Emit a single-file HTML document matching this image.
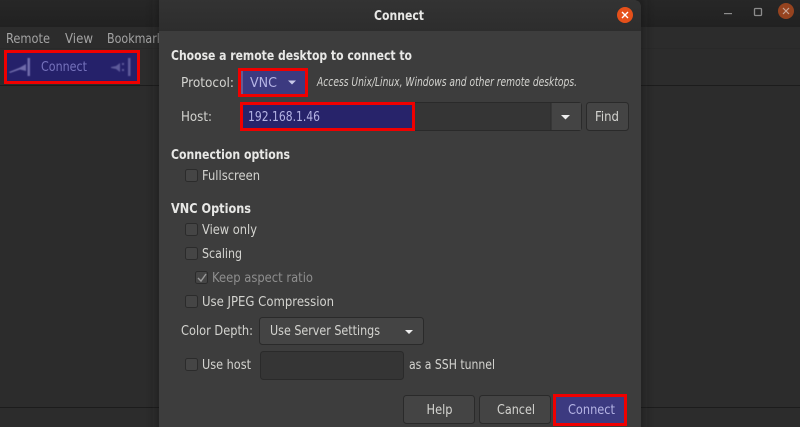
<!DOCTYPE html>
<html>
<head>
<meta charset="utf-8">
<style>
html,body{margin:0;padding:0;background:#2c2c2c;width:800px;height:427px;overflow:hidden}
svg{display:block}
text{font-family:"DejaVu Sans","Liberation Sans",sans-serif;font-size:13px;fill:#d4d4d0}
.b{font-weight:bold;fill:#e8e8e6}
.cb{fill:#454545;stroke:#2b2b2b;stroke-width:1}
.btn{fill:#444444;stroke:#2a2a2a;stroke-width:1}
</style>
</head>
<body>
<svg width="800" height="427" viewBox="0 0 800 427" xmlns="http://www.w3.org/2000/svg">
<defs>
<linearGradient id="tb" x1="0" y1="0" x2="0" y2="1"><stop offset="0" stop-color="#272727"/><stop offset="1" stop-color="#212121"/></linearGradient>
<linearGradient id="hd" x1="0" y1="0" x2="0" y2="1"><stop offset="0" stop-color="#333333"/><stop offset="1" stop-color="#2d2d2d"/></linearGradient>
<filter id="sh" x="-10%" y="-10%" width="120%" height="120%"><feGaussianBlur stdDeviation="5"/></filter>
<filter id="bl" x="-10%" y="-10%" width="120%" height="120%"><feGaussianBlur stdDeviation="0.5"/></filter>
</defs>

<!-- main window -->
<rect x="0" y="0" width="800" height="27" fill="url(#tb)"/>
<rect x="0" y="27" width="800" height="400" fill="#2c2c2c"/>
<rect x="0" y="48" width="800" height="1" fill="#292929"/>
<rect x="0" y="85" width="800" height="1" fill="#1c1c1c"/>
<rect x="0" y="407" width="800" height="1" fill="#1c1c1c"/>

<text x="6" y="43" textLength="44" lengthAdjust="spacingAndGlyphs" style="fill:#a4a4a4">Remote</text>
<text x="65" y="43" textLength="28" lengthAdjust="spacingAndGlyphs" style="fill:#a4a4a4">View</text>
<text x="107" y="43" textLength="62" lengthAdjust="spacingAndGlyphs" style="fill:#a4a4a4">Bookmarks</text>

<!-- toolbar connect -->
<rect x="5.5" y="51.500" width="133" height="31" fill="#25216a" stroke="#f00000" stroke-width="3"/>
<g filter="url(#bl)">
<path d="M9 72 L20 67.500 L26 64 L26 71 L20 69.500 L10 73 Z" fill="#6f6caa"/>
<rect x="27.500" y="58" width="2.500" height="18" fill="#6f6caa"/>
<path d="M111 67 L116 66 L120 63 L120 72 L116 69 L111 68 Z" fill="#5d5a9a"/>
<rect x="122" y="63" width="2" height="2" fill="#5d5a9a"/>
<rect x="122" y="69" width="2" height="2" fill="#5d5a9a"/>
<rect x="128" y="58" width="2.500" height="18" fill="#5d5a9a"/>
</g>
<text x="41" y="71" textLength="46" lengthAdjust="spacingAndGlyphs" style="fill:#7673bd">Connect</text>

<!-- window controls -->
<rect x="724" y="13" width="8" height="1.200" fill="#8c8c8c"/>
<rect x="754.500" y="8.500" width="7" height="7" rx="1" fill="none" stroke="#8c8c8c" stroke-width="1.300"/>
<circle cx="786" cy="11" r="8" fill="#96431f"/>
<path d="M783 8 L789 14 M789 8 L783 14" stroke="#c8a898" stroke-width="1.200" fill="none"/>

<!-- dialog -->
<rect x="156" y="-8" width="488" height="445" rx="8" fill="#141414" opacity=".45" filter="url(#sh)"/>
<path d="M159 427 L159 0 L633 0 Q641 0 641 8 L641 427 Z" fill="#3d3d3d"/>
<path d="M159 31 L159 0 L633 0 Q641 0 641 8 L641 31 Z" fill="url(#hd)"/>
<text class="b" x="374" y="20" textLength="50" lengthAdjust="spacingAndGlyphs">Connect</text>
<circle cx="625" cy="15" r="8" fill="#e5501a"/>
<path d="M622 12 L628 18 M628 12 L622 18" stroke="#fff" stroke-width="1.400" fill="none"/>

<text class="b" x="171" y="60" textLength="241" lengthAdjust="spacingAndGlyphs">Choose a remote desktop to connect to</text>

<text x="181" y="87" textLength="53" lengthAdjust="spacingAndGlyphs">Protocol:</text>
<rect x="239.500" y="69.500" width="67" height="26" fill="#3c3a80" stroke="#f00000" stroke-width="3"/>
<rect x="241" y="71" width="2" height="23" fill="#6a5a90"/>
<text x="250" y="87" textLength="27" lengthAdjust="spacingAndGlyphs" style="fill:#b5b4e4">VNC</text>
<path d="M288 80.500 H296 L292 84.500 Z" fill="#c8c8e8"/>
<text x="317" y="86" textLength="260" lengthAdjust="spacingAndGlyphs" font-style="italic" style="font-size:12px;fill:#d4d4d0">Access Unix/Linux, Windows and other remote desktops.</text>

<text x="181" y="121" textLength="31" lengthAdjust="spacingAndGlyphs">Host:</text>
<rect x="240.500" y="102.500" width="341" height="28" rx="3" fill="#353535" stroke="#2a2a2a"/>
<rect x="551" y="103" width="30" height="27" fill="#444444"/>
<rect x="550.500" y="103" width="1" height="27" fill="#2a2a2a"/>
<path d="M561 115 H570 L565.500 119.500 Z" fill="#eeeeee"/>
<rect x="241.500" y="103.500" width="172" height="26" fill="#27236a" stroke="#f00000" stroke-width="3"/>
<text x="248" y="121" textLength="72" lengthAdjust="spacingAndGlyphs" style="fill:#b5b4e4">192.168.1.46</text>
<rect class="btn" x="586.500" y="102.500" width="42" height="28" rx="3"/>
<text x="595" y="121" textLength="24" lengthAdjust="spacingAndGlyphs">Find</text>

<text class="b" x="171" y="159" textLength="119" lengthAdjust="spacingAndGlyphs">Connection options</text>
<rect class="cb" x="185.500" y="169.500" width="12" height="12" rx="2"/>
<text x="202" y="180" textLength="58" lengthAdjust="spacingAndGlyphs">Fullscreen</text>

<text class="b" x="171" y="213" textLength="80" lengthAdjust="spacingAndGlyphs">VNC Options</text>
<rect class="cb" x="185.500" y="223.500" width="12" height="12" rx="2"/>
<text x="202" y="234" textLength="55" lengthAdjust="spacingAndGlyphs">View only</text>
<rect class="cb" x="185.500" y="247.500" width="12" height="12" rx="2"/>
<text x="202" y="258" textLength="40" lengthAdjust="spacingAndGlyphs">Scaling</text>
<rect class="cb" x="195.500" y="271.500" width="12" height="12" rx="2"/>
<path d="M198 278 L201 281 L206 274" fill="none" stroke="#9a9a9a" stroke-width="1.400"/>
<text x="212" y="282" textLength="101" lengthAdjust="spacingAndGlyphs" style="fill:#8e8e8e">Keep aspect ratio</text>
<rect class="cb" x="185.500" y="295.500" width="12" height="12" rx="2"/>
<text x="202" y="306" textLength="132" lengthAdjust="spacingAndGlyphs">Use JPEG Compression</text>

<text x="181" y="335" textLength="72" lengthAdjust="spacingAndGlyphs">Color Depth:</text>
<rect class="btn" x="259.500" y="317.500" width="164" height="27" rx="3"/>
<text x="270" y="335" textLength="110" lengthAdjust="spacingAndGlyphs">Use Server Settings</text>
<path d="M405 330 H413 L409 334 Z" fill="#eeeeee"/>

<rect class="cb" x="185.500" y="358.500" width="12" height="12" rx="2"/>
<text x="202" y="369" textLength="49" lengthAdjust="spacingAndGlyphs">Use host</text>
<rect x="260.500" y="351.500" width="143" height="28" rx="3" fill="#353535" stroke="#2a2a2a"/>
<text x="409" y="369" textLength="86" lengthAdjust="spacingAndGlyphs">as a SSH tunnel</text>

<rect class="btn" x="403.500" y="395.500" width="71" height="28" rx="3"/>
<text x="426.500" y="414" textLength="26" lengthAdjust="spacingAndGlyphs">Help</text>
<rect class="btn" x="479.500" y="395.500" width="71" height="28" rx="3"/>
<text x="497" y="414" textLength="38" lengthAdjust="spacingAndGlyphs">Cancel</text>
<rect x="554.500" y="395.500" width="71" height="29" fill="#3c3a80" stroke="#f00000" stroke-width="3"/>
<text x="568" y="414" textLength="47" lengthAdjust="spacingAndGlyphs" style="fill:#b5b4e4">Connect</text>
</svg>
</body>
</html>
